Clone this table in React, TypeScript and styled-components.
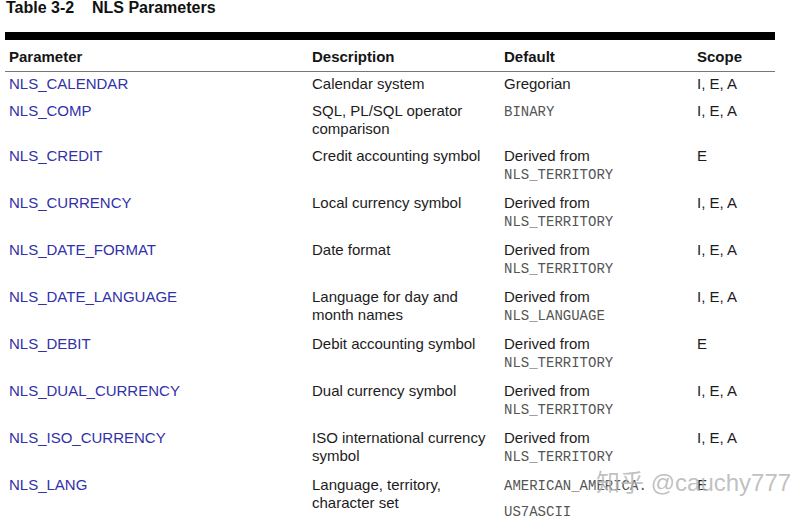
import React from "react";
import styled, { createGlobalStyle } from "styled-components";

const GlobalStyle = createGlobalStyle`
  body {
    margin: 0;
    background: #ffffff;
    font-family: "Liberation Sans", Arial, sans-serif;
  }
`;

const Page = styled.div`
  position: relative;
  width: 809px;
  height: 521px;
  overflow: hidden;
  background: #ffffff;
`;

const Title = styled.div`
  padding: 0 0 0 6px;
  font-size: 16px;
  line-height: 16px;
  font-weight: bold;
  color: #111;
  white-space: pre;
`;

const TableWrap = styled.div`
  margin: 16px 0 0 5px;
  width: 770px;
`;

const TopBar = styled.div`
  height: 8px;
  background: #000;
`;

const Row = styled.div<{ $head?: boolean }>`
  display: grid;
  grid-template-columns: 303px 192px 193px 1fr;
  padding: ${(p) => (p.$head ? "8px 0 5px" : "3px 0 6px")};
  border-bottom: ${(p) => (p.$head ? "1px solid #777" : "none")};
`;

const HeadCell = styled.div`
  padding-left: 4px;
  font-size: 15px;
  line-height: 18px;
  font-weight: bold;
  color: #151515;
`;

const Cell = styled.div`
  padding-left: 4px;
  font-size: 15px;
  line-height: 18px;
  color: #1c1c1c;
`;

const Link = styled.span`
  color: #3131a9;
`;

const Mono = styled.div<{ $gap?: number }>`
  font-family: "Liberation Mono", "Courier New", monospace;
  font-size: 14px;
  line-height: 20px;
  color: #555;
  margin-top: ${(p) => p.$gap ?? 0}px;
`;

const Watermark = styled.div`
  position: absolute;
  left: 596px;
  top: 469px;
  font-family: "Liberation Sans", "Noto Sans CJK SC", sans-serif;
  font-size: 24px;
  line-height: 28px;
  color: rgba(140, 140, 140, 0.55);
  text-shadow: 0 0 1px rgba(255, 255, 255, 0.6);
  white-space: nowrap;
  pointer-events: none;
`;

interface Param {
  name: string;
  desc: string[];
  def: string;
  mono?: string[];
  monoOnly?: boolean;
  scope: string;
}

const params: Param[] = [
  { name: "NLS_CALENDAR", desc: ["Calendar system"], def: "Gregorian", scope: "I, E, A" },
  { name: "NLS_COMP", desc: ["SQL, PL/SQL operator", "comparison"], def: "", mono: ["BINARY"], monoOnly: true, scope: "I, E, A" },
  { name: "NLS_CREDIT", desc: ["Credit accounting symbol"], def: "Derived from", mono: ["NLS_TERRITORY"], scope: "E" },
  { name: "NLS_CURRENCY", desc: ["Local currency symbol"], def: "Derived from", mono: ["NLS_TERRITORY"], scope: "I, E, A" },
  { name: "NLS_DATE_FORMAT", desc: ["Date format"], def: "Derived from", mono: ["NLS_TERRITORY"], scope: "I, E, A" },
  { name: "NLS_DATE_LANGUAGE", desc: ["Language for day and", "month names"], def: "Derived from", mono: ["NLS_LANGUAGE"], scope: "I, E, A" },
  { name: "NLS_DEBIT", desc: ["Debit accounting symbol"], def: "Derived from", mono: ["NLS_TERRITORY"], scope: "E" },
  { name: "NLS_DUAL_CURRENCY", desc: ["Dual currency symbol"], def: "Derived from", mono: ["NLS_TERRITORY"], scope: "I, E, A" },
  { name: "NLS_ISO_CURRENCY", desc: ["ISO international currency", "symbol"], def: "Derived from", mono: ["NLS_TERRITORY"], scope: "I, E, A" },
  { name: "NLS_LANG", desc: ["Language, territory,", "character set"], def: "", mono: ["AMERICAN_AMERICA.", "US7ASCII"], monoOnly: true, scope: "E" },
];

const App: React.FC = () => {
  return (
    <Page>
      <GlobalStyle />
      <Title>{"Table 3-2    NLS Parameters"}</Title>
      <TableWrap>
        <TopBar />
        <Row $head>
          <HeadCell>Parameter</HeadCell>
          <HeadCell>Description</HeadCell>
          <HeadCell>Default</HeadCell>
          <HeadCell>Scope</HeadCell>
        </Row>
        {params.map((p) => (
          <Row key={p.name}>
            <Cell>
              <Link>{p.name}</Link>
            </Cell>
            <Cell>
              {p.desc.map((d) => (
                <div key={d}>{d}</div>
              ))}
            </Cell>
            <Cell>
              {!p.monoOnly && <div>{p.def}</div>}
              {p.mono?.map((m, i) => (
                <Mono key={m} $gap={p.monoOnly && i > 0 ? 6 : 0}>
                  {m}
                </Mono>
              ))}
            </Cell>
            <Cell>{p.scope}</Cell>
          </Row>
        ))}
      </TableWrap>
      <Watermark>知乎 @cauchy777</Watermark>
    </Page>
  );
};

export default App;
